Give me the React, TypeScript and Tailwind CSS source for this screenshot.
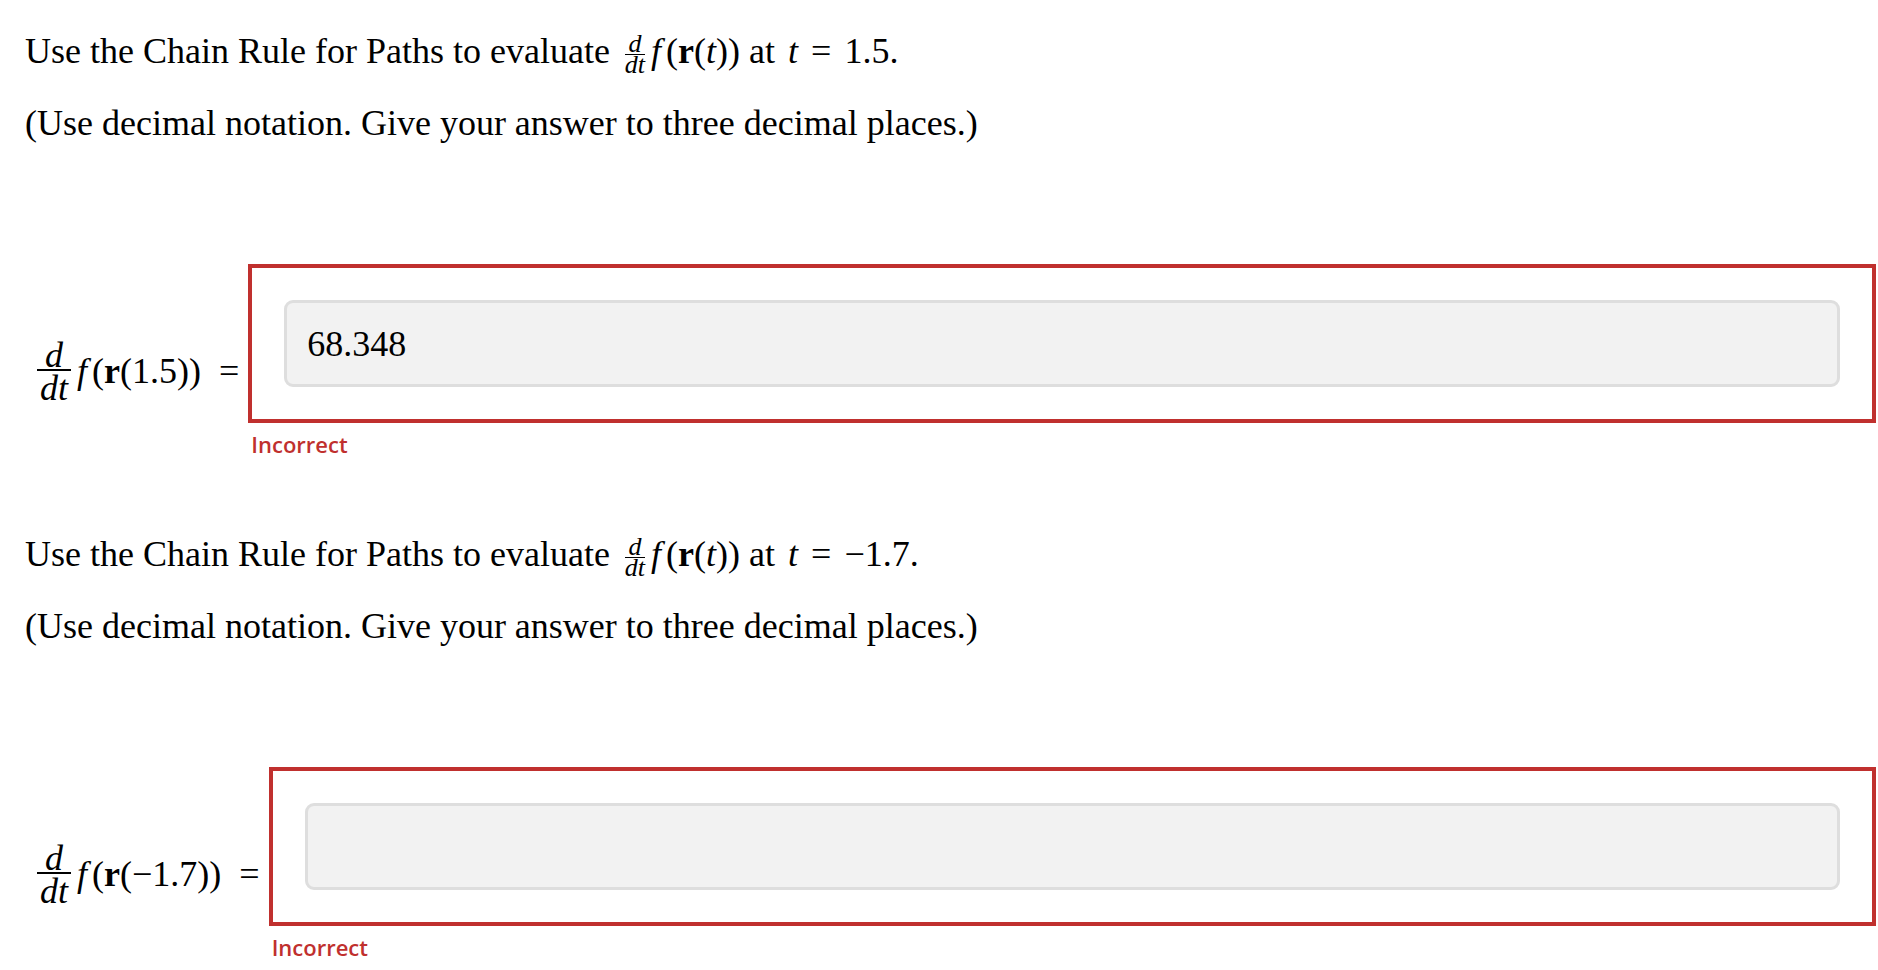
import React from 'react';

const serif = { fontFamily: '"Liberation Serif", "Times New Roman", serif' };

const SmallFrac: React.FC = () => (
  <span className="inline-flex flex-col items-stretch align-middle -my-[4px] ml-[6px] mr-[6px] italic text-[26px]">
    <span className="block text-center leading-[20px]">d</span>
    <span className="block h-[1px] bg-black" />
    <span className="block text-center leading-[20px]">dt</span>
  </span>
);

const Prompt: React.FC<{ t: string }> = ({ t }) => (
  <>
    <p className="leading-[42px]">
      Use the Chain Rule for Paths to evaluate <SmallFrac />
      <span className="italic">f</span>
      <span className="ml-[5px]">(</span>
      <span className="font-bold">r</span>(<span className="italic">t</span>)) at{' '}
      <span className="italic ml-[4px]">t</span>
      <span className="mx-[13px]">=</span>
      {t}.
    </p>
    <p className="leading-[42px] mt-[30px]">
      (Use decimal notation. Give your answer to three decimal places.)
    </p>
  </>
);

const AnswerRow: React.FC<{ arg: string; value: string }> = ({ arg, value }) => (
  <div className="flex items-start gap-[9px] pl-[12px] mt-[120px]">
    <div className="flex items-start mt-[77px] shrink-0">
      <span className="inline-flex flex-col items-stretch italic text-[36px]">
        <span className="block text-center leading-[28px]">d</span>
        <span className="block h-[2px] bg-black" />
        <span className="block text-center leading-[34px] px-[3px]">dt</span>
      </span>
      <span className="mt-[9px] ml-[6px] leading-[42px] whitespace-nowrap">
        <span className="italic mr-[5px]">f</span>(<span className="font-bold">r</span>({arg}))
        <span className="ml-[18px]">=</span>
      </span>
    </div>
    <div className="flex-1 flex flex-col">
      <div className="border-4 border-[#c0302e] p-[32px]">
        <input
          readOnly
          value={value}
          style={serif}
          className="block w-full h-[87px] rounded-[9px] border-[3px] border-[#dedede] bg-[#f2f2f2] px-[20px] text-[36px] text-black outline-none"
        />
      </div>
      <span
        className="mt-[6px] ml-[3px] text-[22px] leading-[30px] font-semibold text-[#c0302e]"
        style={{ fontFamily: '"Open Sans", "Noto Sans", sans-serif' }}
      >
        Incorrect
      </span>
    </div>
  </div>
);

const App: React.FC = () => {
  return (
    <div className="min-h-screen bg-white text-black text-[36px] pl-[25px] pr-[2px] pt-[30px]" style={serif}>
      <Prompt t="1.5" />
      <AnswerRow arg="1.5" value="68.348" />
      <div className="mt-[74px]">
        <Prompt t="−1.7" />
        <AnswerRow arg="−1.7" value="" />
      </div>
    </div>
  );
};

export default App;
